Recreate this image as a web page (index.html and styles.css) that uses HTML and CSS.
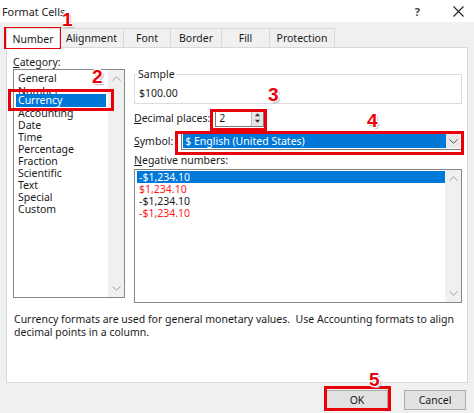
FILE: index.html
```html
<!DOCTYPE html>
<html>
<head>
<meta charset="utf-8">
<link rel="stylesheet" href="styles.css">
</head>
<body>
<div class="dialog">
  <div class="titlebar">
    <span class="title">Format Cells</span>
    <span class="help">?</span>
    <span class="close"><svg width="11" height="11" viewBox="0 0 11 11"><path d="M0.5 0.5 L10.5 10.5 M10.5 0.5 L0.5 10.5" stroke="#222" stroke-width="1.1" fill="none"/></svg></span>
  </div>
  <div class="tabs">
    <div class="tab active">Number</div>
    <div class="tab">Alignment</div>
    <div class="tab">Font</div>
    <div class="tab">Border</div>
    <div class="tab">Fill</div>
    <div class="tab">Protection</div>
  </div>
  <div class="panel">
    <div class="main">
      <div class="left">
        <div class="label"><u>C</u>ategory:</div>
        <div class="listbox cat">
          <ul class="items">
            <li>General</li>
            <li>Number</li>
            <li class="sel">Currency</li>
            <li>Accounting</li>
            <li>Date</li>
            <li>Time</li>
            <li>Percentage</li>
            <li>Fraction</li>
            <li>Scientific</li>
            <li>Text</li>
            <li>Special</li>
            <li>Custom</li>
          </ul>
          <div class="scroll">
            <svg width="9" height="5" viewBox="0 0 9 5"><path d="M0.5 4.5 L4.5 0.8 L8.5 4.5" stroke="#a0a0a0" fill="none"/></svg>
            <svg width="9" height="5" viewBox="0 0 9 5"><path d="M0.5 0.5 L4.5 4.2 L8.5 0.5" stroke="#a0a0a0" fill="none"/></svg>
          </div>
        </div>
      </div>
      <div class="right">
        <fieldset class="sample">
          <legend>Sample</legend>
          <div class="sample-val">$100.00</div>
        </fieldset>
        <div class="row dec">
          <span class="rlabel"><u>D</u>ecimal places:</span>
          <div class="spin">
            <span class="spin-val">2</span>
            <div class="spin-btns">
              <svg width="11" height="8" viewBox="0 0 11 8"><path d="M2.5 6 L5.5 2.5 L8.5 6 Z" fill="#333"/></svg>
              <svg width="11" height="8" viewBox="0 0 11 8"><path d="M2.5 2 L5.5 5.5 L8.5 2 Z" fill="#333"/></svg>
            </div>
          </div>
        </div>
        <div class="row sym">
          <span class="rlabel"><u>S</u>ymbol:</span>
          <div class="combo">
            <span class="combo-val">$ English (United States)</span>
            <span class="combo-btn"><svg width="9" height="5" viewBox="0 0 9 5"><path d="M0.5 0.5 L4.5 4.2 L8.5 0.5" stroke="#555" fill="none"/></svg></span>
          </div>
        </div>
        <div class="label neg-label"><u>N</u>egative numbers:</div>
        <div class="listbox neg">
          <ul class="items">
            <li class="sel">-$1,234.10</li>
            <li class="red">$1,234.10</li>
            <li>-$1,234.10</li>
            <li class="red">-$1,234.10</li>
          </ul>
          <div class="scroll">
            <svg width="9" height="5" viewBox="0 0 9 5"><path d="M0.5 4.5 L4.5 0.8 L8.5 4.5" stroke="#a0a0a0" fill="none"/></svg>
            <svg width="9" height="5" viewBox="0 0 9 5"><path d="M0.5 0.5 L4.5 4.2 L8.5 0.5" stroke="#a0a0a0" fill="none"/></svg>
          </div>
        </div>
      </div>
    </div>
    <p class="desc">Currency formats are used for general monetary values.&nbsp; Use Accounting formats to align decimal points in a column.</p>
  </div>
  <div class="footer">
    <button class="btn">OK</button>
    <button class="btn">Cancel</button>
  </div>

  <div class="mark box1"></div>
  <div class="mark box2"></div>
  <div class="mark box3"></div>
  <div class="mark box4"></div>
  <div class="mark box5"></div>
  <span class="num n1">1</span>
  <span class="num n2">2</span>
  <span class="num n3">3</span>
  <span class="num n4">4</span>
  <span class="num n5">5</span>
</div>
</body>
</html>
```

FILE: styles.css
```css
html, body {
  margin: 0;
  padding: 0;
}
body {
  font-family: "Noto Sans", "Open Sans", sans-serif;
  font-size: 10.5px;
  color: #1a1a1a;
}
.dialog {
  position: relative;
  width: 474px;
  height: 413px;
  background: #f0f0f0;
  overflow: hidden;
}
.titlebar {
  height: 22px;
  background: #fff;
  display: flex;
  align-items: center;
  padding: 0 2px;
}
.title {
  flex: 1;
  font-size: 10.8px;
  color: #222;
}
.help {
  font-size: 11px;
  font-weight: bold;
  color: #444;
  margin-right: 33px;
}
.close {
  display: flex;
  margin-right: 8px;
}
.tabs {
  display: flex;
  margin-top: 6px;
  padding-left: 6px;
  height: 19px;
}
.tab {
  box-sizing: border-box;
  height: 19px;
  padding: 0 8px;
  display: flex;
  align-items: center;
  justify-content: center;
  border: 1px solid #d9d9d9;
  border-left: none;
  border-bottom: none;
  background: #f0f0f0;
  font-size: 10.5px;
}
.tab:nth-child(1) { width: 54px; border-left: 1px solid #d9d9d9; }
.tab:nth-child(2) { width: 64px; }
.tab:nth-child(3) { width: 47px; }
.tab:nth-child(4) { width: 51px; }
.tab:nth-child(5) { width: 48px; }
.tab:nth-child(6) { width: 65px; }
.tab.active {
  background: #fff;
  height: 20px;
  position: relative;
  z-index: 1;
}
.panel {
  box-sizing: border-box;
  margin: 0 6px;
  height: 336px;
  background: #fff;
  border: 1px solid #d9d9d9;
  padding: 7px 5px 0 6px;
}
.main {
  display: flex;
  gap: 9px;
}
.left {
  width: 112px;
}
.label {
  height: 14px;
  line-height: 14px;
}
.listbox {
  box-sizing: border-box;
  border: 1px solid #828790;
  background: #fff;
  display: flex;
}
.cat {
  height: 229px;
}
.items {
  list-style: none;
  margin: 0;
  padding: 2px 2px;
  flex: 1;
}
.items li {
  height: 12px;
  line-height: 12px;
  padding-left: 2px;
  white-space: nowrap;
}
.cat .items li:nth-child(2) {
  height: 10px;
  line-height: 14px;
  overflow: hidden;
}
.cat .items li.sel {
  height: 13px;
  line-height: 13px;
}
.items li.sel {
  background: #0078d7;
  color: #fff;
}
.items li.red {
  color: #ff1a1a;
}
.scroll {
  width: 16px;
  background: #f0f0f0;
  display: flex;
  flex-direction: column;
  justify-content: space-between;
  align-items: center;
  padding: 6px 0 6px;
}
.right {
  flex: 1;
  padding-top: 14px;
}
.sample {
  box-sizing: border-box;
  margin: 0;
  height: 35px;
  border: 1px solid #dcdcdc;
  padding: 0 4px;
}
.sample legend {
  padding: 0 1px;
  margin-left: -2px;
  line-height: 11px;
}
.sample-val {
  margin-top: 6px;
}
.row {
  display: flex;
  align-items: center;
}
.dec {
  margin-top: 4px;
  height: 20px;
}
.rlabel {
  white-space: nowrap;
}
.spin {
  box-sizing: border-box;
  margin-left: 5px;
  width: 49px;
  height: 18px;
  border: 1px solid #7a7a7a;
  display: flex;
  align-items: center;
  justify-content: space-between;
  padding-left: 3px;
}
.spin-btns {
  display: flex;
  flex-direction: column;
  background: #e6e6e6;
  border-left: 1px solid #bbb;
  height: 16px;
  justify-content: center;
}
.spin-btns svg {
  display: block;
  height: 7px;
}
.sym {
  margin-top: 3px;
  height: 20px;
}
.combo {
  box-sizing: border-box;
  margin-left: 8px;
  flex: 1;
  height: 18px;
  border: 1px solid #7a7a7a;
  display: flex;
  padding: 1px;
  margin-right: 0;
}
.combo-val {
  flex: 1;
  background: #0078d7;
  color: #fff;
  padding-left: 2px;
  line-height: 14px;
}
.combo-btn {
  width: 14px;
  display: flex;
  align-items: center;
  justify-content: center;
  background: #e9e9e9;
}
.neg-label {
  margin-top: 2px;
}
.neg {
  margin-top: 2px;
  height: 134px;
}
.neg .items {
  padding: 1px 0 0 2px;
}
.desc {
  margin: 10px 0 0 1px;
  line-height: 13px;
  width: 456px;
}
.footer {
  display: flex;
  justify-content: flex-end;
  gap: 16px;
  padding: 7px 8px 0 0;
}
.btn {
  box-sizing: border-box;
  width: 62px;
  height: 20px;
  background: #e1e1e1;
  border: 1px solid #adadad;
  font-family: "Noto Sans", "Open Sans", sans-serif;
  font-size: 10.5px;
  color: #1a1a1a;
  padding: 0;
}
.mark {
  position: absolute;
  box-sizing: border-box;
  border: 3px solid #e8000b;
}
.box1 { left: 4px; top: 27px; width: 57px; height: 22px; }
.box2 { left: 8px; top: 89px; width: 106px; height: 22px; }
.box3 { left: 210px; top: 109px; width: 57px; height: 22px; }
.box4 { left: 175px; top: 131px; width: 289px; height: 24px; }
.box5 { left: 324px; top: 386px; width: 67px; height: 25px; }
.num {
  position: absolute;
  font-family: "Liberation Sans", Arial, sans-serif;
  font-weight: bold;
  font-size: 19px;
  line-height: 19px;
  color: #e8000b;
  text-shadow: 1px 1px 0 #fff, -1px -1px 0 #fff, 1px -1px 0 #fff, -1px 1px 0 #fff, 2px 2px 1px #bbb;
}
.n1 { left: 62px; top: 10px; }
.n2 { left: 92px; top: 67px; }
.n3 { left: 268px; top: 85px; }
.n4 { left: 367px; top: 111px; }
.n5 { left: 369px; top: 370px; }
```
